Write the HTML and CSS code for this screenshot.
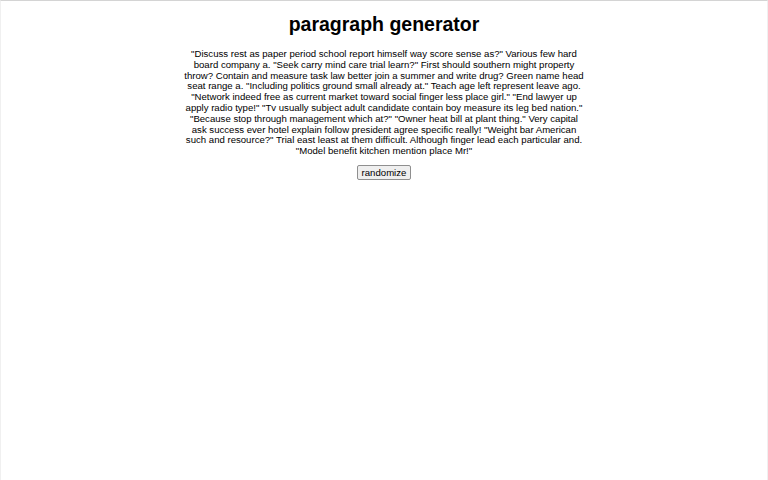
FILE: index.html
```html
<!DOCTYPE html>
<html>
<head>
    <meta charset="UTF-8">
    <link rel="stylesheet" href="styles.css">
</head>
<body>
    <div class="page">
        <h1>paragraph generator</h1>
        <p class="paragraph" id="paragraph">"Discuss rest as paper period school report himself way score sense as?" Various few hard board company a. "Seek carry mind care trial learn?" First should southern might property throw? Contain and measure task law better join a summer and write drug? Green name head seat range a. "Including politics ground small already at." Teach age left represent leave ago. "Network indeed free as current market toward social finger less place girl." "End lawyer up apply radio type!" "Tv usually subject adult candidate contain boy measure its leg bed nation." "Because stop through management which at?" "Owner heat bill at plant thing." Very capital ask success ever hotel explain follow president agree specific really! "Weight bar American such and resource?" Trial east least at them difficult. Although finger lead each particular and. "Model benefit kitchen mention place Mr!"</p>
        <button class="randomize" type="button">randomize</button>
    </div>
</body>
</html>
```

FILE: styles.css
```css
html, body {
    height: 100%;
}

body {
    margin: 0;
    box-sizing: border-box;
    border-top: 1px solid #d4d4d4;
    border-left: 1px solid #f0f0f0;
    border-right: 1px solid #f0f0f0;
    background: #fff;
    font-family: "Liberation Sans", Arial, sans-serif;
    color: #000;
}

.page {
    width: 400px;
    margin: 0 auto;
    display: flex;
    flex-direction: column;
    align-items: center;
}

h1 {
    font-size: 19.5px;
    font-weight: bold;
    margin: 12px 0 0;
}

.paragraph {
    font-size: 9.6px;
    line-height: 10.8px;
    text-align: center;
    margin: 13px 0 0;
}

.randomize {
    margin-top: 8px;
    font-family: "Liberation Sans", Arial, sans-serif;
    font-size: 9.6px;
    padding: 1px 4px;
    border: 1px solid #8f8f8f;
    border-radius: 2px;
    background: #efefef;
    color: #000;
}
```
